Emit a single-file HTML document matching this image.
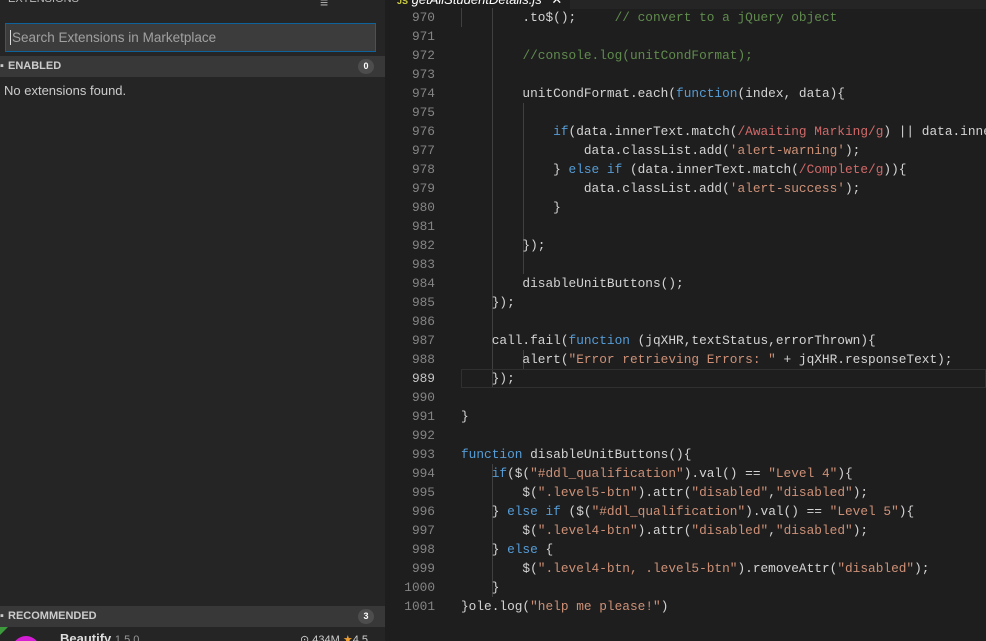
<!DOCTYPE html>
<html style="overflow:hidden;height:641px"><head><meta charset="utf-8"><style>
*{margin:0;padding:0;box-sizing:border-box}
body{width:986px;height:641px;overflow:hidden;background:#1e1e1e;position:relative;font-family:"Liberation Sans",sans-serif}
#side{position:absolute;left:0;top:0;width:385px;height:641px;background:#252526;overflow:hidden}
.hdr{position:absolute;left:0;width:385px;height:21px;background:#383838;color:#ccc;font-size:11px;font-weight:bold;line-height:21px;padding-left:8px}
.badge{position:absolute;right:11px;top:3px;width:16px;height:15px;border-radius:8px;background:#4d4d4d;color:#fff;font-size:9px;text-align:center;line-height:15px}
#code{position:absolute;left:385px;top:8px;width:601px;height:633px;overflow:hidden;font-family:"Liberation Mono",monospace;font-size:12.8px}
.l{position:absolute;left:0;height:19px;line-height:19px;white-space:pre;width:601px}
.n{position:absolute;left:0;width:50px;text-align:right;color:#858585}
.t{position:absolute;left:76px;color:#d4d4d4}
.k{color:#569cd6}.s{color:#ce9178}.c{color:#608b4e}.r{color:#d16969}
.g{position:absolute;width:1px;background:#404040}
</style></head><body>
<div id="side">
<div style="position:absolute;left:8px;top:-7px;color:#bbb;font-size:11px">EXTENSIONS</div>
<div style="position:absolute;left:320px;top:-6px;color:#aaa;font-size:14px">≡</div>
<div style="position:absolute;left:352px;top:-12px;color:#ccc;font-size:14px">···</div>
<div style="position:absolute;left:5px;top:23px;width:371px;height:29px;background:#3c3c3c;border:1px solid #0e639c;color:#a0a0a0;font-size:13.5px;line-height:27px;padding-left:4px"><span style="border-left:1px solid #ddd;padding-left:1px">Search Extensions in Marketplace</span></div>
<div class="hdr" style="top:56px"><span style="position:absolute;left:0;color:#ccc">▪</span>ENABLED<span class="badge">0</span></div>
<div style="position:absolute;left:4px;top:83px;color:#ccc;font-size:13px">No extensions found.</div>
<div class="hdr" style="top:606px"><span style="position:absolute;left:0;color:#ccc">▪</span>RECOMMENDED<span class="badge">3</span></div>
<div style="position:absolute;left:0;top:627px;width:0;height:0;border-top:8px solid #3c9a3c;border-right:8px solid transparent"></div>
<div style="position:absolute;left:12px;top:636px;width:28px;height:28px;border-radius:50%;background:#d41ed4"></div>
<div style="position:absolute;left:60px;top:631px;color:#ddd;font-size:13px;font-weight:bold">Beautify <span style="font-weight:normal;color:#999;font-size:11px">1.5.0</span></div>
<div style="position:absolute;left:300px;top:633px;color:#ccc;font-size:11px">⊙ 434M <span style="color:#f0a030">★</span>4.5</div>
</div>
<div style="position:absolute;left:385px;top:0;width:601px;height:9px;background:#252526"></div>
<div style="position:absolute;left:385px;top:0;width:185px;height:9px;background:#1e1e1e;overflow:hidden">
<div style="position:absolute;left:12px;top:-8px;font-size:13px;color:#fff;font-style:italic;white-space:nowrap"><span style="color:#cbcb41;font-size:9px;font-weight:bold;font-style:normal">JS</span> getAllStudentDetails.js <span style="font-style:normal;margin-left:6px">✕</span></div>
</div>
<div id="code">
<div class="g" style="left:76px;top:0;height:19px"></div>
<div class="g" style="left:107px;top:0;height:380px"></div>
<div class="g" style="left:138px;top:95px;height:171px"></div>
<div class="g" style="left:107px;top:456px;height:133px"></div>
<div class="g" style="left:138px;top:342px;height:19px"></div>
<div style="position:absolute;left:76px;top:361px;width:525px;height:19px;border:1px solid #303030"></div>
<div class="l" style="top:0px"><span class="n">970</span><span class="t">        .to$();     <span class="c">// convert to a jQuery object</span></span></div>
<div class="l" style="top:19px"><span class="n">971</span></div>
<div class="l" style="top:38px"><span class="n">972</span><span class="t">        <span class="c">//console.log(unitCondFormat);</span></span></div>
<div class="l" style="top:57px"><span class="n">973</span></div>
<div class="l" style="top:76px"><span class="n">974</span><span class="t">        unitCondFormat.each(<span class="k">function</span>(index, data){</span></div>
<div class="l" style="top:95px"><span class="n">975</span></div>
<div class="l" style="top:114px"><span class="n">976</span><span class="t">            <span class="k">if</span>(data.innerText.match(<span class="r">/Awaiting Marking/g</span>) || data.innerText</span></div>
<div class="l" style="top:133px"><span class="n">977</span><span class="t">                data.classList.add(<span class="s">'alert-warning'</span>);</span></div>
<div class="l" style="top:152px"><span class="n">978</span><span class="t">            } <span class="k">else if</span> (data.innerText.match(<span class="r">/Complete/g</span>)){</span></div>
<div class="l" style="top:171px"><span class="n">979</span><span class="t">                data.classList.add(<span class="s">'alert-success'</span>);</span></div>
<div class="l" style="top:190px"><span class="n">980</span><span class="t">            }</span></div>
<div class="l" style="top:209px"><span class="n">981</span></div>
<div class="l" style="top:228px"><span class="n">982</span><span class="t">        });</span></div>
<div class="l" style="top:247px"><span class="n">983</span></div>
<div class="l" style="top:266px"><span class="n">984</span><span class="t">        disableUnitButtons();</span></div>
<div class="l" style="top:285px"><span class="n">985</span><span class="t">    });</span></div>
<div class="l" style="top:304px"><span class="n">986</span></div>
<div class="l" style="top:323px"><span class="n">987</span><span class="t">    call.fail(<span class="k">function</span> (jqXHR,textStatus,errorThrown){</span></div>
<div class="l" style="top:342px"><span class="n">988</span><span class="t">        alert(<span class="s">"Error retrieving Errors: "</span> + jqXHR.responseText);</span></div>
<div class="l" style="top:361px"><span class="n" style="color:#c6c6c6">989</span><span class="t">    });</span></div>
<div class="l" style="top:380px"><span class="n">990</span></div>
<div class="l" style="top:399px"><span class="n">991</span><span class="t">}</span></div>
<div class="l" style="top:418px"><span class="n">992</span></div>
<div class="l" style="top:437px"><span class="n">993</span><span class="t"><span class="k">function</span> disableUnitButtons(){</span></div>
<div class="l" style="top:456px"><span class="n">994</span><span class="t">    <span class="k">if</span>($(<span class="s">"#ddl_qualification"</span>).val() == <span class="s">"Level 4"</span>){</span></div>
<div class="l" style="top:475px"><span class="n">995</span><span class="t">        $(<span class="s">".level5-btn"</span>).attr(<span class="s">"disabled"</span>,<span class="s">"disabled"</span>);</span></div>
<div class="l" style="top:494px"><span class="n">996</span><span class="t">    } <span class="k">else if</span> ($(<span class="s">"#ddl_qualification"</span>).val() == <span class="s">"Level 5"</span>){</span></div>
<div class="l" style="top:513px"><span class="n">997</span><span class="t">        $(<span class="s">".level4-btn"</span>).attr(<span class="s">"disabled"</span>,<span class="s">"disabled"</span>);</span></div>
<div class="l" style="top:532px"><span class="n">998</span><span class="t">    } <span class="k">else</span> {</span></div>
<div class="l" style="top:551px"><span class="n">999</span><span class="t">        $(<span class="s">".level4-btn, .level5-btn"</span>).removeAttr(<span class="s">"disabled"</span>);</span></div>
<div class="l" style="top:570px"><span class="n">1000</span><span class="t">    }</span></div>
<div class="l" style="top:589px"><span class="n">1001</span><span class="t">}ole.log(<span class="s">"help me please!"</span>)</span></div>
</div>
</body></html>
